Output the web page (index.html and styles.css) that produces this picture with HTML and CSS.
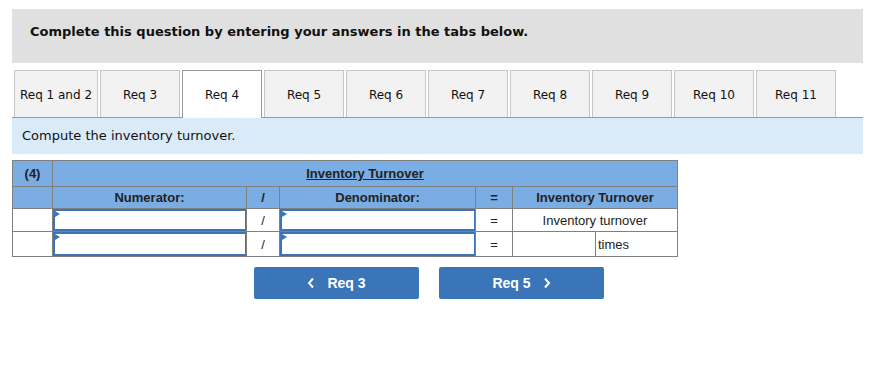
FILE: index.html
```html
<!DOCTYPE html>
<html lang="en">

<head>
  <meta charset="UTF-8">
  <meta name="viewport" content="width=device-width, initial-scale=1.0">
  <title>Req 4 - Inventory turnover</title>
  <link rel="stylesheet" href="styles.css">
</head>

<body>
  <div class="page">
    <div class="banner">Complete this question by entering your answers in the tabs below.</div>

    <div class="tabs">
      <div class="tab wide">Req 1 and 2</div>
      <div class="tab">Req 3</div>
      <div class="tab active">Req 4</div>
      <div class="tab">Req 5</div>
      <div class="tab">Req 6</div>
      <div class="tab">Req 7</div>
      <div class="tab">Req 8</div>
      <div class="tab">Req 9</div>
      <div class="tab">Req 10</div>
      <div class="tab">Req 11</div>
    </div>

    <div class="prompt">Compute the inventory turnover.</div>

    <table class="calc">
      <colgroup>
        <col style="width: 40px">
        <col style="width: 194px">
        <col style="width: 33px">
        <col style="width: 196px">
        <col style="width: 37px">
        <col style="width: 83px">
        <col style="width: 82px">
      </colgroup>
      <thead>
        <tr class="title">
          <th>(4)</th>
          <th colspan="6"><u>Inventory Turnover</u></th>
        </tr>
        <tr class="heads">
          <th></th>
          <th>Numerator:</th>
          <th>/</th>
          <th>Denominator:</th>
          <th>=</th>
          <th colspan="2">Inventory Turnover</th>
        </tr>
      </thead>
      <tbody>
        <tr class="r1">
          <td></td>
          <td class="entry"><span class="flag"></span><input type="text"></td>
          <td>/</td>
          <td class="entry"><span class="flag"></span><input type="text"></td>
          <td>=</td>
          <td colspan="2">Inventory turnover</td>
        </tr>
        <tr class="r2">
          <td></td>
          <td class="entry"><span class="flag"></span><input type="text"></td>
          <td>/</td>
          <td class="entry"><span class="flag"></span><input type="text"></td>
          <td>=</td>
          <td></td>
          <td class="unit">times</td>
        </tr>
      </tbody>
    </table>

    <div class="nav">
      <button class="btn">
        <svg width="8" height="12" viewBox="0 0 8 12"><path d="M6 1.5 L2 6 L6 10.5" fill="none" stroke="#fff" stroke-width="2"/></svg>
        <span>Req 3</span>
      </button>
      <button class="btn">
        <span>Req 5</span>
        <svg width="8" height="12" viewBox="0 0 8 12"><path d="M2 1.5 L6 6 L2 10.5" fill="none" stroke="#fff" stroke-width="2"/></svg>
      </button>
    </div>
  </div>
</body>

</html>
```

FILE: styles.css
```css
body {
  margin: 0;
  background: #fff;
  font-family: "DejaVu Sans", Verdana, sans-serif;
  color: #111;
}

.page {
  width: 851px;
  padding: 9px 0 0 12px;
}

.banner {
  height: 54px;
  box-sizing: border-box;
  padding: 15px 0 0 18px;
  background: #e0e0e0;
  font-size: 13px;
  font-weight: bold;
  color: #111;
}

.tabs {
  display: flex;
  gap: 2px;
  margin-top: 7px;
  padding-left: 2px;
  border-bottom: 1px solid #9a9a9a;
  height: 47px;
}

.tab {
  width: 80px;
  height: 47px;
  box-sizing: border-box;
  padding-top: 2px;
  display: flex;
  align-items: center;
  justify-content: center;
  background: #f2f2f2;
  border: 1px solid #c6c6c6;
  border-bottom: none;
  font-size: 12px;
  color: #111;
}

.tab.wide {
  width: 84px;
}

.tab.active {
  background: #fff;
  border-color: #9a9a9a;
  height: 48px;
  padding-bottom: 1px;
  position: relative;
  z-index: 1;
}

.prompt {
  height: 36px;
  box-sizing: border-box;
  padding: 10px 0 0 10px;
  background: #d9ebf9;
  font-size: 13px;
  color: #111;
}

.calc {
  margin-top: 6px;
  border-collapse: collapse;
  table-layout: fixed;
  width: 665px;
  font-family: "Liberation Sans", Arial, sans-serif;
  font-size: 13px;
  color: #222;
}

.calc th,
.calc td {
  border: 1px solid #808080;
  padding: 0;
  text-align: center;
}

.calc thead th {
  background: #79ade3;
  font-weight: bold;
}

.calc .title th {
  height: 25px;
}

.calc .heads th {
  height: 21px;
}

.calc .r1 td {
  height: 22px;
}

.calc .r2 td {
  height: 24px;
}

.calc .unit {
  text-align: left;
  padding-left: 2px;
}

.entry {
  position: relative;
}

.entry input {
  display: block;
  width: 100%;
  box-sizing: border-box;
  margin: 0;
  border: 2px solid #3d74b8;
  border-right-width: 1px;
  background: #fff;
  outline: none;
}

.r1 .entry input {
  height: 22px;
}

.r2 .entry input {
  height: 24px;
}

.flag {
  position: absolute;
  top: 2px;
  left: 2px;
  width: 0;
  height: 0;
  border-top: 3px solid transparent;
  border-bottom: 3px solid transparent;
  border-left: 5px solid #3d74b8;
}

.nav {
  display: flex;
  gap: 20px;
  margin-top: 10px;
  padding-left: 242px;
}

.btn {
  width: 165px;
  height: 32px;
  display: flex;
  align-items: center;
  justify-content: center;
  gap: 12px;
  border: none;
  border-radius: 2px;
  background: #3a75b9;
  color: #fff;
  font-family: "Liberation Sans", Arial, sans-serif;
  font-size: 14px;
  font-weight: bold;
  padding: 0;
}
```
